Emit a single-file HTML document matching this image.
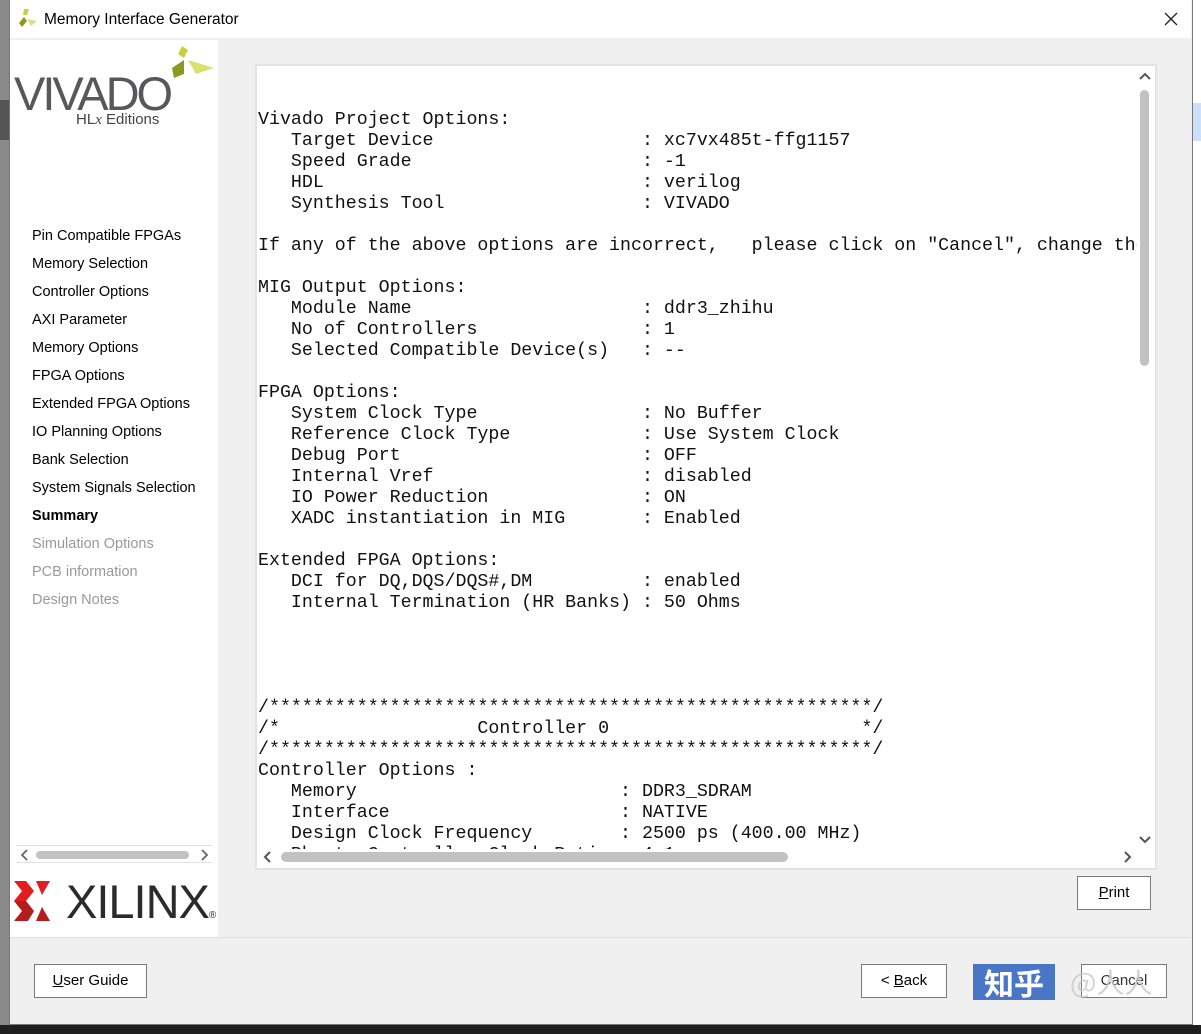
<!DOCTYPE html><html><head><style>
body{margin:0;width:1201px;height:1034px;position:relative;overflow:hidden;background:#f0f0f0;font-family:"Liberation Sans",sans-serif}
.a{position:absolute}
.nav div{position:absolute;left:32px;font-size:14.5px;color:#000}
pre{margin:0;font-family:"Liberation Mono",monospace;font-size:18.3px;line-height:21px;color:#111}
.btn{position:absolute;background:#fff;border:1px solid #7a7a7a;font-size:15px;text-align:center;line-height:32px;box-sizing:border-box;height:34px}
</style></head><body>
<div class="a" style="left:0;top:0;width:9px;height:1034px;background:#8a8a8a"></div>
<div class="a" style="left:0;top:100px;width:9px;height:40px;background:#555"></div>
<div class="a" style="left:1192px;top:0;width:9px;height:1034px;background:#fff"></div>
<div class="a" style="left:1192px;top:103px;width:9px;height:38px;background:#cce0fb"></div>
<div class="a" style="left:0;top:1025px;width:1201px;height:9px;background:#1f1f1f"></div>
<div class="a" style="left:9px;top:0;width:1182px;height:1024px;border:1px solid #777;border-top:none;background:#f0f0f0"></div>
<div class="a" style="left:10px;top:0;width:1181px;height:38px;background:#fff"></div>
<svg class="a" style="left:17px;top:9px" width="20" height="18"><polygon points="2,14 7,8 10,12 5,18" fill="#8a9a20"/><polygon points="7,0 12,0 10,6 6,6" fill="#c8d040"/><polygon points="10,10 20,12 14,17" fill="#d8e080"/></svg>
<div class="a" style="left:44px;top:11px;font-size:15.5px;color:#000">Memory Interface Generator</div>
<svg class="a" style="left:1164px;top:12px" width="14" height="14"><path d="M1 1L13 13M13 1L1 13" stroke="#222" stroke-width="1.3"/></svg>
<div class="a" style="left:10px;top:40px;width:208px;height:897px;background:#fff"></div>
<div class="a" style="left:14px;top:66px;font-size:47px;color:#58585a;letter-spacing:-3px;font-weight:300">VIVADO</div>
<svg class="a" style="left:172px;top:46px" width="42" height="40"><polygon points="10,0 16,4 12,12 6,8" fill="#c8d040"/><polygon points="0,22 12,14 12,28 2,32" fill="#8a9a20"/><polygon points="16,14 42,22 24,28" fill="#d8e070"/></svg>
<div class="a" style="left:76px;top:111px;font-size:15px;color:#444">HL<i style="font-family:'Liberation Serif'">x</i> Editions</div>
<div class="nav">
<div style="top:228px">Pin Compatible FPGAs</div><div style="top:256px">Memory Selection</div><div style="top:284px">Controller Options</div><div style="top:312px">AXI Parameter</div><div style="top:340px">Memory Options</div><div style="top:368px">FPGA Options</div><div style="top:396px">Extended FPGA Options</div><div style="top:424px">IO Planning Options</div><div style="top:452px">Bank Selection</div><div style="top:480px">System Signals Selection</div><div style="top:508px;font-weight:bold">Summary</div><div style="top:536px;color:#999">Simulation Options</div><div style="top:564px;color:#999">PCB information</div><div style="top:592px;color:#999">Design Notes</div>
</div>
<div class="a" style="left:16px;top:845px;width:196px;height:1px;background:#e0e0e0"></div>
<div class="a" style="left:16px;top:862px;width:196px;height:1px;background:#e0e0e0"></div>
<svg class="a" style="left:20px;top:849px" width="10" height="12"><path d="M7 1L2 6L7 11" stroke="#666" stroke-width="1.8" fill="none"/></svg>
<svg class="a" style="left:199px;top:849px" width="10" height="12"><path d="M3 1L8 6L3 11" stroke="#666" stroke-width="1.8" fill="none"/></svg>
<div class="a" style="left:36px;top:851px;width:153px;height:8px;border-radius:4px;background:#c2c2c2"></div>
<svg class="a" style="left:14px;top:881px" width="38" height="40"><polygon points="0,0 12,0 20,10 12,20 0,20 8,10" fill="#e31d1d"/><polygon points="0,20 12,20 20,30 14,40 0,40 8,30" fill="#b51c1c"/><polygon points="22,0 36,0 28,14" fill="#e31d1d"/><polygon points="28,26 36,40 22,40" fill="#b51c1c"/></svg>
<div class="a" style="left:66px;top:874px;font-size:47px;color:#2b2b2b;letter-spacing:-1px">XILINX<span style="font-size:10px">®</span></div>
<div class="a" style="left:255px;top:64px;width:898px;height:802px;border:2px solid #e3e3e3;background:#fff"></div>
<div class="a" style="left:1137px;top:66px;width:16px;height:783px;background:#fff"></div>
<div class="a" style="left:1140px;top:90px;width:9px;height:276px;border-radius:5px;background:#c2c2c2"></div>
<svg class="a" style="left:1139px;top:72px" width="12" height="10"><path d="M1 7L6 2L11 7" stroke="#555" stroke-width="2" fill="none"/></svg>
<svg class="a" style="left:1139px;top:835px" width="12" height="10"><path d="M1 2L6 7L11 2" stroke="#555" stroke-width="2" fill="none"/></svg>
<div class="a" style="left:257px;top:849px;width:880px;height:17px;background:#fff"></div>
<div class="a" style="left:281px;top:852px;width:507px;height:10px;border-radius:5px;background:#c2c2c2"></div>
<svg class="a" style="left:263px;top:851px" width="10" height="12"><path d="M7 1L2 6L7 11" stroke="#555" stroke-width="2" fill="none"/></svg>
<svg class="a" style="left:1122px;top:851px" width="10" height="12"><path d="M3 1L8 6L3 11" stroke="#555" stroke-width="2" fill="none"/></svg>
<div class="a" style="left:258px;top:66px;width:879px;height:783px;overflow:hidden"><pre style="position:absolute;top:44px;left:0">Vivado Project Options:
   Target Device                   : xc7vx485t-ffg1157
   Speed Grade                     : -1
   HDL                             : verilog
   Synthesis Tool                  : VIVADO

If any of the above options are incorrect,   please click on "Cancel", change the CORE Generator Project Options

MIG Output Options:
   Module Name                     : ddr3_zhihu
   No of Controllers               : 1
   Selected Compatible Device(s)   : --

FPGA Options:
   System Clock Type               : No Buffer
   Reference Clock Type            : Use System Clock
   Debug Port                      : OFF
   Internal Vref                   : disabled
   IO Power Reduction              : ON
   XADC instantiation in MIG       : Enabled

Extended FPGA Options:
   DCI for DQ,DQS/DQS#,DM          : enabled
   Internal Termination (HR Banks) : 50 Ohms




/*******************************************************/
/*                  Controller 0                       */
/*******************************************************/
Controller Options :
   Memory                        : DDR3_SDRAM
   Interface                     : NATIVE
   Design Clock Frequency        : 2500 ps (400.00 MHz)
   Phy to Controller Clock Ratio : 4:1</pre></div>
<div class="btn" style="left:1077px;top:876px;width:74px"><u>P</u>rint</div>
<div class="a" style="left:10px;top:937px;width:1181px;height:1px;background:#e0e0e0"></div>
<div class="btn" style="left:34px;top:964px;width:113px"><u>U</u>ser Guide</div>
<div class="btn" style="left:861px;top:964px;width:86px">&lt; <u>B</u>ack</div>
<div class="a" style="left:973px;top:964px;width:82px;height:36px;background:#4a76c8;color:#fff;font-family:'Noto Sans CJK SC',sans-serif;font-size:30px;line-height:36px;text-align:center;font-weight:bold">知乎</div>
<div class="btn" style="left:1081px;top:964px;width:86px;color:#333">Cancel</div>
<div class="a" style="left:1070px;top:962px;font-size:28px;color:rgba(200,200,200,.8);font-family:'Noto Sans CJK SC',sans-serif">@人人</div>
</body></html>
